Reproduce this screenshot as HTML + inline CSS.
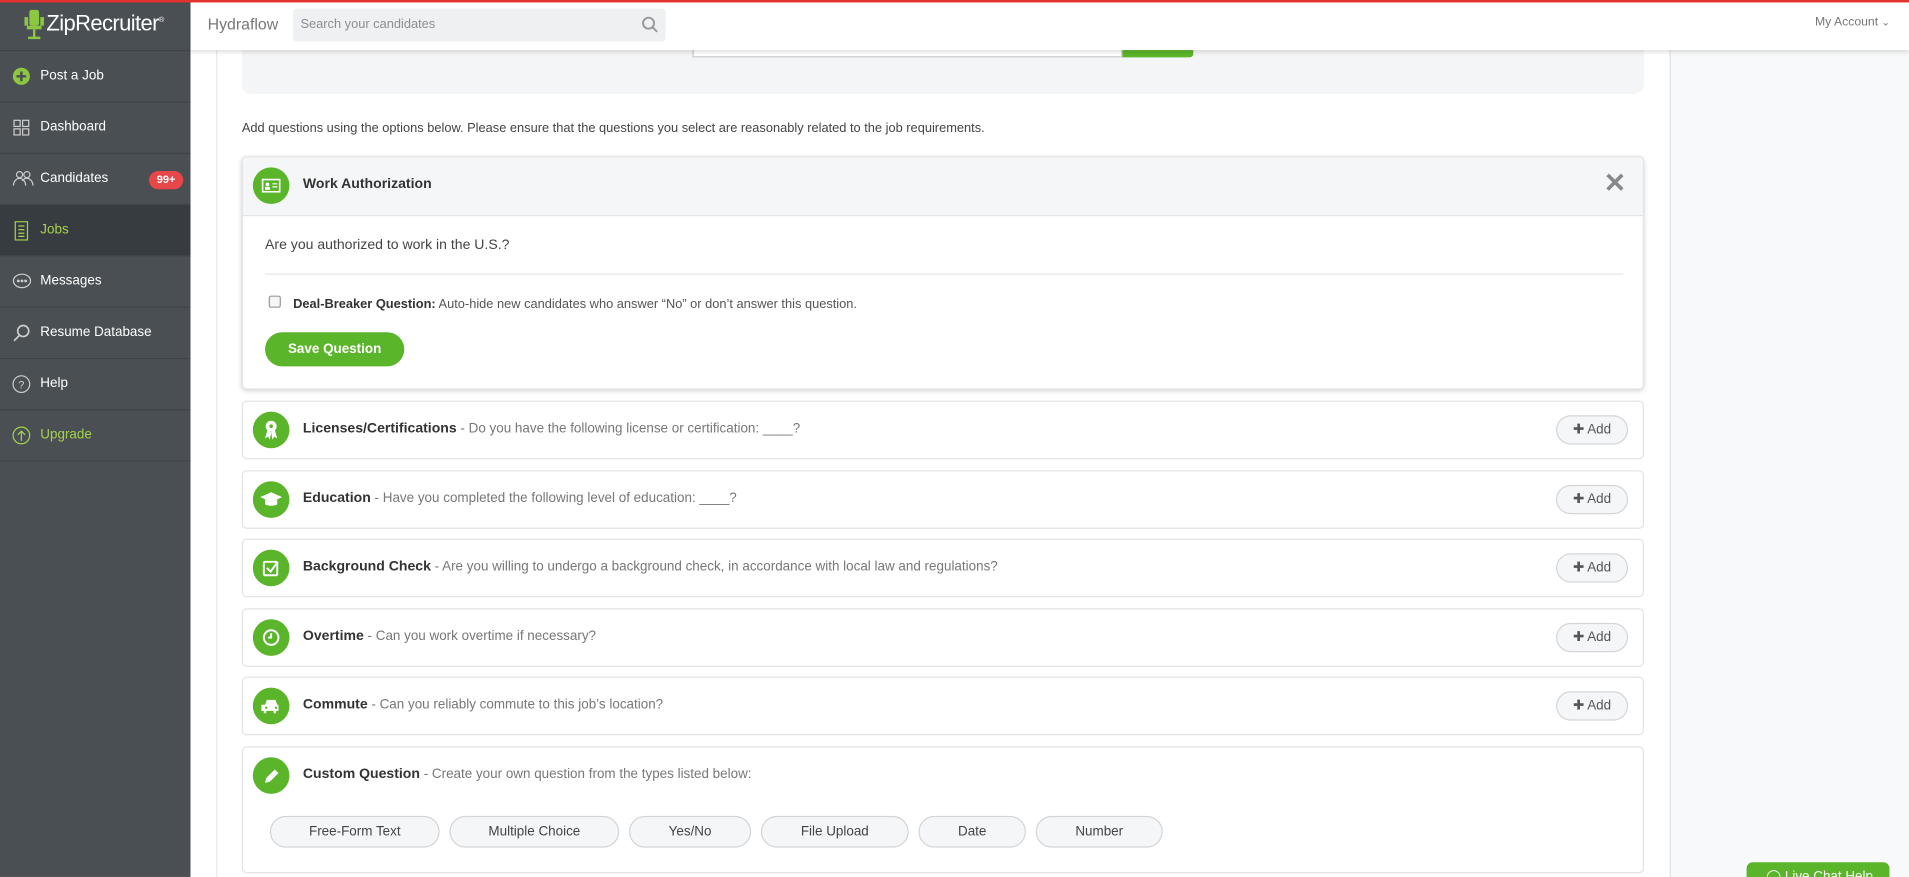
<!DOCTYPE html>
<html><head><meta charset="utf-8"><style>
*{box-sizing:border-box;margin:0;padding:0}
html,body{width:1909px;height:877px;overflow:hidden;background:#fff}
#w{position:absolute;left:0;top:0;width:1563px;height:718px;transform:scale(1.22137);transform-origin:0 0;font-family:"Liberation Sans",Arial,sans-serif;color:#333;overflow:hidden}
.a{position:absolute}
#side{left:0;top:0;width:156px;height:718px;background:#4a4f54}
.it{position:absolute;left:0;width:156px;height:42px;border-top:1px solid #3f4449;color:#fff;font-size:11px;line-height:41px;padding-left:33px}
.it svg{position:absolute;left:10px;top:13px}
#hdr{left:156px;top:0;width:1407px;height:41px;background:#fff;box-shadow:0 2px 3px rgba(0,0,0,.12);z-index:3}
.card{position:absolute;left:198px;width:1148px;background:#fff;border:1px solid #e2e4e6;border-radius:4px}
.ic{position:absolute;left:8px;width:30px;height:30px;border-radius:50%;background:#5ab52a}
.ct{position:absolute;left:49px;font-size:11px;color:#777;white-space:nowrap}
.ct b{color:#333;font-size:11.5px}
.add{position:absolute;right:12px;width:59px;height:24px;border:1px solid #d3d5d8;border-radius:12px;background:#f5f6f7;font-size:11px;color:#555;text-align:center;line-height:22px}
.pill{position:absolute;top:56px;height:26px;border:1px solid #d3d5d8;border-radius:13px;background:#f5f6f7;font-size:11px;color:#444;text-align:center;line-height:24px}
</style></head><body><div id="w">
<div class="a" style="left:0;top:0;width:1563px;height:2px;background:#e5312e;z-index:5"></div>
<div class="a" id="side">
 <div class="a" style="left:20px;top:8px">
  <svg width="16" height="26" viewBox="0 0 16 26"><rect x="4" y="0" width="8" height="13" rx="2" fill="#8dc63f"/><rect x="0" y="6" width="3" height="7" fill="#8dc63f"/><rect x="13" y="6" width="3" height="7" fill="#8dc63f"/><rect x="2" y="13" width="12" height="3" fill="#8dc63f"/><rect x="7" y="16" width="2" height="7" fill="#8dc63f"/><rect x="3" y="22" width="10" height="2" fill="#8dc63f"/></svg>
 </div>
 <div class="a" style="left:38px;top:9px;color:#fff;font-size:18px;letter-spacing:-.5px">ZipRecruiter<sup style="font-size:6px">®</sup></div>
 <div class="it" style="top:41px"><svg width="15" height="15"><circle cx="7.5" cy="7.5" r="7" fill="#8dc63f"/><path d="M7.5 3.5v8M3.5 7.5h8" stroke="#4a4f54" stroke-width="2"/></svg>Post a Job</div>
 <div class="it" style="top:83px"><svg width="15" height="15" fill="none" stroke="#ccc"><rect x="1.5" y="1.5" width="5" height="5"/><rect x="8.5" y="1.5" width="5" height="5"/><rect x="1.5" y="8.5" width="5" height="5"/><rect x="8.5" y="8.5" width="5" height="5"/></svg>Dashboard</div>
 <div class="it" style="top:125px"><svg width="18" height="15" fill="none" stroke="#ccc"><circle cx="6" cy="4" r="2.5"/><circle cx="12" cy="4" r="2.5"/><path d="M1 13c0-4 3-6 5-6s5 2 5 6M8 9c1-1 2-2 4-2 2 0 5 2 5 6"/></svg>Candidates<span class="a" style="left:122px;top:14px;width:28px;height:15px;background:#e8474a;border-radius:8px;font-size:9px;line-height:15px;text-align:center;font-weight:bold">99+</span></div>
 <div class="it" style="top:167px;background:#373c41;color:#a5d24a"><svg width="15" height="16" fill="none" stroke="#a5d24a"><rect x="2.5" y="0.5" width="10" height="15"/><path d="M5 4h5M5 7h5M5 10h5M5 12.5h5"/></svg>Jobs</div>
 <div class="it" style="top:209px"><svg width="17" height="15" fill="none" stroke="#ccc"><ellipse cx="8" cy="7" rx="7" ry="5.5"/><circle cx="5" cy="7" r=".7" fill="#ccc"/><circle cx="8" cy="7" r=".7" fill="#ccc"/><circle cx="11" cy="7" r=".7" fill="#ccc"/></svg>Messages</div>
 <div class="it" style="top:251px"><svg width="15" height="15" fill="none" stroke="#ccc" stroke-width="1.4"><circle cx="9" cy="6" r="4.5"/><path d="M6 9.5L1.5 14"/></svg>Resume Database</div>
 <div class="it" style="top:293px"><svg width="15" height="15" fill="none" stroke="#ccc"><circle cx="7.5" cy="7.5" r="6.8"/><text x="5" y="11" font-size="9" fill="#ccc" stroke="none" font-family="Liberation Sans">?</text></svg>Help</div>
 <div class="it" style="top:335px;color:#a5d24a"><svg width="15" height="15" fill="none" stroke="#a5d24a"><circle cx="7.5" cy="7.5" r="6.8"/><path d="M7.5 12V4M4.5 7l3-3 3 3"/></svg>Upgrade</div>
 <div class="a" style="left:0;top:377px;width:156px;height:1px;background:#3f4449"></div>
</div>
<div class="a" id="hdr">
 <div class="a" style="left:14px;top:12px;font-size:13px;color:#777">Hydraflow</div>
 <div class="a" style="left:84px;top:7px;width:305px;height:27px;background:#eef0f1;border-radius:3px;font-size:10.5px;color:#8a8f94;line-height:27px;padding-left:6px">Search your candidates
  <svg class="a" style="right:6px;top:6px" width="14" height="14" fill="none" stroke="#999" stroke-width="1.6"><circle cx="6" cy="6" r="4.5"/><path d="M9.3 9.3L13 13"/></svg></div>
 <div class="a" style="left:1330px;top:13px;font-size:10px;color:#777">My Account <span style="font-size:8px">⌄</span></div>
</div>
<div class="a" style="left:156px;top:41px;width:21px;height:677px;background:#fff"></div>
<div class="a" style="left:177px;top:41px;width:1px;height:677px;background:#e6e8ea"></div>
<div class="a" style="left:1367px;top:41px;width:196px;height:677px;background:#f8f9fa;border-left:1px solid #dfe1e3"></div>
<div class="a" style="left:198px;top:30px;width:1148px;height:47px;background:#f4f5f6;border-radius:0 0 8px 8px"></div>
<div class="a" style="left:567px;top:30px;width:352px;height:17px;background:#fff;border:1px solid #ccc;border-top:none"></div>
<div class="a" style="left:919px;top:30px;width:58px;height:17px;background:#5ab52a;border-radius:0 0 3px 0"></div>
<div class="a" style="left:198px;top:99px;font-size:10.5px;color:#444">Add questions using the options below. Please ensure that the questions you select are reasonably related to the job requirements.</div>

<div class="card" style="top:128px;height:191px;box-shadow:0 1px 4px rgba(0,0,0,.18);overflow:hidden">
 <div class="a" style="left:0;top:0;width:1148px;height:48px;background:#f5f6f7;border-bottom:1px solid #e2e4e6"></div>
 <div class="ic" style="top:8px"><svg width="30" height="30"><rect x="8" y="10" width="14" height="10" fill="none" stroke="#fff" stroke-width="1.3"/><circle cx="12" cy="14" r="1.5" fill="#fff"/><rect x="10" y="16" width="4" height="2.5" fill="#fff"/><path d="M16 13.5h4M16 16h4" stroke="#fff"/></svg></div>
 <div class="ct" style="top:16px"><b>Work Authorization</b></div>
 <div class="a" style="left:1114px;top:8px;font-size:22px;color:#888;font-weight:bold">✕</div>
 <div class="a" style="left:18px;top:66px;font-size:11.5px;color:#444">Are you authorized to work in the U.S.?</div>
 <div class="a" style="left:18px;top:95px;width:1112px;height:1px;background:#e6e8ea"></div>
 <div class="a" style="left:21px;top:113px;width:10px;height:10px;border:1px solid #999;border-radius:2px;background:#f5f5f5"></div>
 <div class="a" style="left:41px;top:114px;font-size:10.5px;color:#555"><b style="color:#333">Deal-Breaker Question:</b> Auto-hide new candidates who answer “No” or don’t answer this question.</div>
 <div class="a" style="left:18px;top:143px;width:114px;height:28px;background:#5ab52a;border-radius:14px;color:#fff;font-weight:bold;font-size:11px;text-align:center;line-height:28px">Save Question</div>
</div>

<div class="card" style="top:328px;height:48px"><div class="ic" style="top:8px"><svg width="30" height="30" fill="#fff"><circle cx="15" cy="12" r="4.5"/><path d="M12 15l-2 7 2.5-1.5L14 23l1-6zM18 15l2 7-2.5-1.5L16 23l-1-6z"/><circle cx="15" cy="12" r="1.5" fill="#5ab52a"/></svg></div><div class="ct" style="top:16px"><b>Licenses/Certifications</b> - Do you have the following license or certification: ____?</div><div class="add" style="top:11px">✚ Add</div></div>
<div class="card" style="top:385px;height:48px"><div class="ic" style="top:8px"><svg width="30" height="30" fill="#fff"><path d="M6 13l9-4 9 4-9 4z"/><path d="M10 15v4c2 1.5 8 1.5 10 0v-4l-5 2z"/></svg></div><div class="ct" style="top:16px"><b>Education</b> - Have you completed the following level of education: ____?</div><div class="add" style="top:11px">✚ Add</div></div>
<div class="card" style="top:441px;height:48px"><div class="ic" style="top:8px"><svg width="30" height="30" fill="none" stroke="#fff" stroke-width="1.6"><rect x="9" y="10" width="11" height="11" rx="1"/><path d="M11.5 15l3 3 6-8"/></svg></div><div class="ct" style="top:16px"><b>Background Check</b> - Are you willing to undergo a background check, in accordance with local law and regulations?</div><div class="add" style="top:11px">✚ Add</div></div>
<div class="card" style="top:498px;height:48px"><div class="ic" style="top:8px"><svg width="30" height="30" fill="none" stroke="#fff" stroke-width="1.6"><circle cx="15" cy="15" r="6"/><path d="M15 11.5V15h-2.5"/></svg></div><div class="ct" style="top:16px"><b>Overtime</b> - Can you work overtime if necessary?</div><div class="add" style="top:11px">✚ Add</div></div>
<div class="card" style="top:554px;height:48px"><div class="ic" style="top:8px"><svg width="30" height="30" fill="#fff"><path d="M10 14l1.5-4h7l1.5 4h1v5h-2v2h-2v-2h-6v2h-2v-2H7v-5z"/><circle cx="11" cy="16.5" r="1" fill="#5ab52a"/><circle cx="19" cy="16.5" r="1" fill="#5ab52a"/></svg></div><div class="ct" style="top:16px"><b>Commute</b> - Can you reliably commute to this job’s location?</div><div class="add" style="top:11px">✚ Add</div></div>
<div class="card" style="top:611px;height:104px"><div class="ic" style="top:8px"><svg width="30" height="30" fill="#fff"><path d="M10 21l1-4 7-7 3 3-7 7z"/></svg></div><div class="ct" style="top:16px"><b>Custom Question</b> - Create your own question from the types listed below:</div>
 <div class="pill" style="left:22px;width:139px">Free-Form Text</div>
 <div class="pill" style="left:169px;width:139px">Multiple Choice</div>
 <div class="pill" style="left:316px;width:100px">Yes/No</div>
 <div class="pill" style="left:424px;width:121px">File Upload</div>
 <div class="pill" style="left:553px;width:88px">Date</div>
 <div class="pill" style="left:649px;width:104px">Number</div>
</div>
<div class="a" style="left:1430px;top:706px;width:117px;height:20px;background:#5ab52a;border-radius:5px 5px 0 0;color:#fff;font-size:11px;padding:5px 0 0 16px">◯ Live Chat Help</div>
</div></body></html>
